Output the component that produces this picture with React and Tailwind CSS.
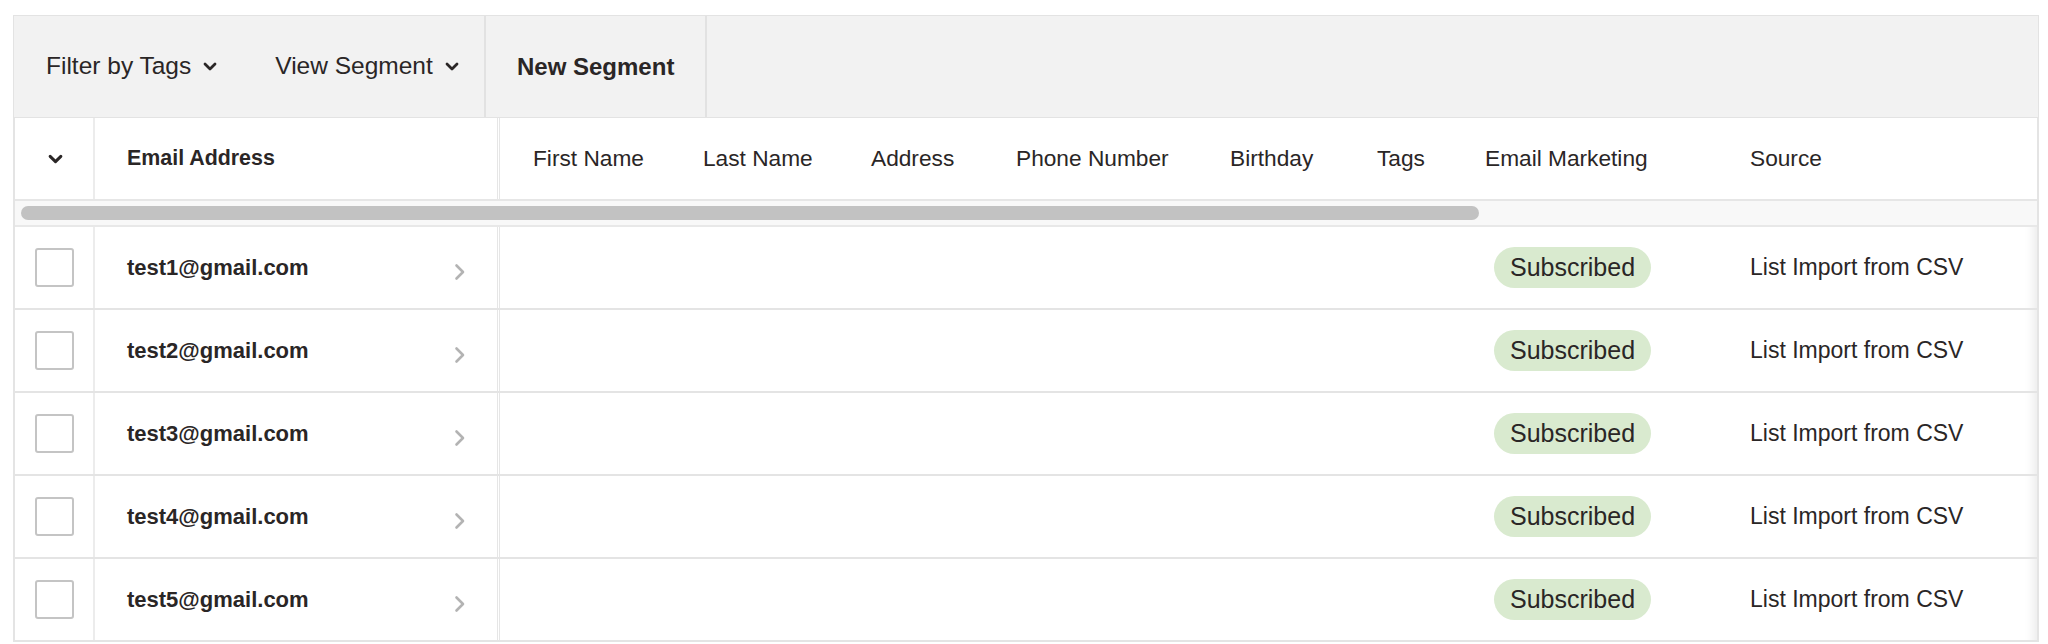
import React from "react";

const ChevronDown = ({ className }) => (
  <svg viewBox="0 0 14 9" className={className} fill="none">
    <path d="M2 2l5 5 5-5" stroke="currentColor" strokeWidth="2.8" strokeLinecap="round" strokeLinejoin="round" />
  </svg>
);

const ChevronRight = () => (
  <svg viewBox="0 0 12 18" className="w-[12px] h-[18px] mt-[8px] text-[#b3b3b3]" fill="none">
    <path d="M2.5 2.5l6.5 6.5-6.5 6.5" stroke="currentColor" strokeWidth="2.6" strokeLinecap="round" strokeLinejoin="round" />
  </svg>
);

const columns = [
  { label: "First Name", w: "w-[170px]" },
  { label: "Last Name", w: "w-[168px]" },
  { label: "Address", w: "w-[145px]" },
  { label: "Phone Number", w: "w-[214px]" },
  { label: "Birthday", w: "w-[147px]" },
  { label: "Tags", w: "w-[108px]" },
  { label: "Email Marketing", w: "w-[265px]" },
  { label: "Source", w: "flex-1" },
];

const contacts = [1, 2, 3, 4, 5].map((n) => `test${n}@gmail.com`);

const App = () => {
  return (
    <div
      className="w-full h-[644px] bg-white pt-[15px] pl-[13px] pr-[9px] overflow-hidden text-[#2a2626]"
      style={{ fontFamily: '"Liberation Sans", Arial, sans-serif' }}
    >
      {/* toolbar */}
      <div className="flex h-[103px] bg-[#f2f2f2] border border-[#e3e3e3] text-[24.5px]">
        <div className="flex items-center w-[472px] pl-[32px] border-r-2 border-[#e2e2e2]">
          <button className="flex items-center gap-[12px]">
            Filter by Tags
            <ChevronDown className="w-[14px] h-[9px]" />
          </button>
          <button className="flex items-center gap-[12px] ml-[58px]">
            View Segment
            <ChevronDown className="w-[14px] h-[9px]" />
          </button>
        </div>
        <div className="flex items-center px-[31px] font-bold text-[24px] border-r-2 border-[#e2e2e2]">New Segment</div>
      </div>

      <div className="border-x-2 border-[#e4e4e4]">
        {/* header */}
        <div className="flex h-[83px] border-b-2 border-[#e6e6e6] text-[22.7px]">
          <div className="w-[80px] flex items-center justify-center border-r-2 border-[#ececec]">
            <ChevronDown className="w-[15px] h-[10px] ml-[2px]" />
          </div>
          <div className="w-[405px] flex items-center pl-[32px] font-bold text-[21.4px] border-r-[3px] border-double border-[#e6e6e6]">
            Email Address
          </div>
          <div className="flex-1 flex items-center pl-[33px]">
            {columns.map((c) => (
              <div key={c.label} className={c.w}>
                {c.label}
              </div>
            ))}
          </div>
        </div>

        {/* horizontal scrollbar */}
        <div className="h-[26px] bg-[#f8f8f8] border-b-2 border-[#e8e8e8] pl-[6px] pt-[5px]">
          <div className="w-[1458px] h-[14px] rounded-full bg-[#c2c2c2]" />
        </div>

        {/* rows */}
        {contacts.map((email) => (
          <div
            key={email}
            className="flex h-[83px] border-b-2 border-[#e4e4e4] shadow-[inset_-14px_0_10px_-10px_rgba(0,0,0,0.08)]"
          >
            <div className="w-[80px] flex items-center justify-center border-r-2 border-[#ececec]">
              <div className="w-[39px] h-[39px] rounded-[3px] border-2 border-[#c4c4c4] bg-white ml-[1px]" />
            </div>
            <div className="w-[405px] flex items-center justify-between pl-[32px] pr-[31px] border-r-[3px] border-double border-[#e6e6e6]">
              <span className="font-bold text-[22px]">{email}</span>
              <ChevronRight />
            </div>
            <div className="flex-1 flex items-center pl-[33px] text-[23px]">
              <div className="w-[952px]" />
              <div className="w-[265px]">
                <span className="inline-flex items-center h-[41px] px-[16px] ml-[9px] rounded-full bg-[#d9eacf] text-[25px]">
                  Subscribed
                </span>
              </div>
              <div className="flex-1">List Import from CSV</div>
            </div>
          </div>
        ))}
      </div>
    </div>
  );
};

export default App;
